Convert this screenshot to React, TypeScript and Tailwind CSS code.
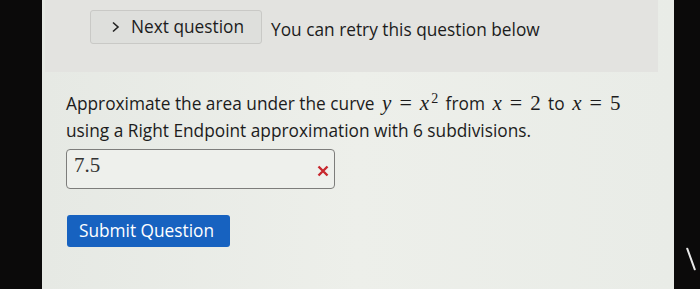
import React from 'react';

const sans = { fontFamily: '"Open Sans", "Noto Sans", sans-serif' };
const serif = { fontFamily: '"Liberation Serif", "DejaVu Serif", serif' };

function V({ children }: { children: React.ReactNode }) {
  return (
    <span className="italic text-[21px] ml-[3px]" style={serif}>
      {children}
    </span>
  );
}

function Eq() {
  return (
    <span className="text-[22px] mx-[8px]" style={serif}>
      =
    </span>
  );
}

function N({ children }: { children: React.ReactNode }) {
  return (
    <span className="text-[21px] mr-[3px]" style={serif}>
      {children}
    </span>
  );
}

export default function App() {
  return (
    <div className="w-[700px] h-[289px] bg-[#0b0a0a] flex overflow-hidden" style={sans}>
      {/* left bezel */}
      <div className="w-[42px] shrink-0" />

      {/* screen */}
      <div className="w-[632px] shrink-0 bg-gradient-to-r from-[#e6e9e4] via-[#edefea] to-[#e9ece7] text-[#1c1c1c]">
        {/* retry banner */}
        <div className="h-[72px] mr-[16px] ml-[3px] bg-[#e3e3e0] flex items-center pl-[45px] pb-[23px] pt-[4px]">
          <button className="h-[34px] pl-[20px] pr-[17px] flex items-center gap-[11px] rounded-[3px] border border-[#c9c9c6] bg-[#dedfdc] text-[17.3px] text-[#1c1c1c]">
            <svg width="9" height="12" viewBox="0 0 9 12" className="mt-[1px]">
              <path d="M2 1.5 L7 6 L2 10.5" fill="none" stroke="#222" strokeWidth="1.6" />
            </svg>
            Next question
          </button>
          <span className="ml-[9px] mt-[6px] text-[17.3px]">You can retry this question below</span>
        </div>

        {/* question */}
        <div className="pl-[24px] pt-[17px]">
          <p className="text-[17.3px] leading-[27px] w-[620px] whitespace-nowrap">
            Approximate the area under the curve <V>y</V>
            <Eq />
            <span className="italic text-[21px]" style={serif}>x</span>
            <sup className="text-[14px] ml-[2px] mr-[3px]" style={serif}>2</sup> from <V>x</V>
            <Eq />
            <N>2</N> to <V>x</V>
            <Eq />
            <N>5</N>
            <br />
            using a Right Endpoint approximation with 6 subdivisions.
          </p>

          <div className="mt-[5px] w-[269px] h-[40px] rounded-[4px] border-[1.5px] border-[#7d7d7b] bg-[#eef0ec] flex items-center justify-between pl-[7px] pr-[5px]">
            <span className="text-[21px] text-[#333] -mt-[7px]" style={serif}>7.5</span>
            <svg width="12" height="12" viewBox="0 0 12 12" className="mt-[4px]">
              <path d="M1.5 1.5 L10.5 10.5 M10.5 1.5 L1.5 10.5" stroke="#c8282e" strokeWidth="2.4" />
            </svg>
          </div>

          <button className="mt-[26px] ml-[1px] w-[163px] h-[32px] rounded-[3px] bg-[#1762c0] text-white text-[17.3px] flex items-center justify-center pr-[4px]">
            Submit Question
          </button>
        </div>
      </div>

      {/* right bezel */}
      <div className="flex-1 relative">
        <div className="absolute left-[16px] top-[247px] w-[2px] h-[24px] bg-[#e8e8e8] -rotate-[20deg] rounded" />
      </div>
    </div>
  );
}
